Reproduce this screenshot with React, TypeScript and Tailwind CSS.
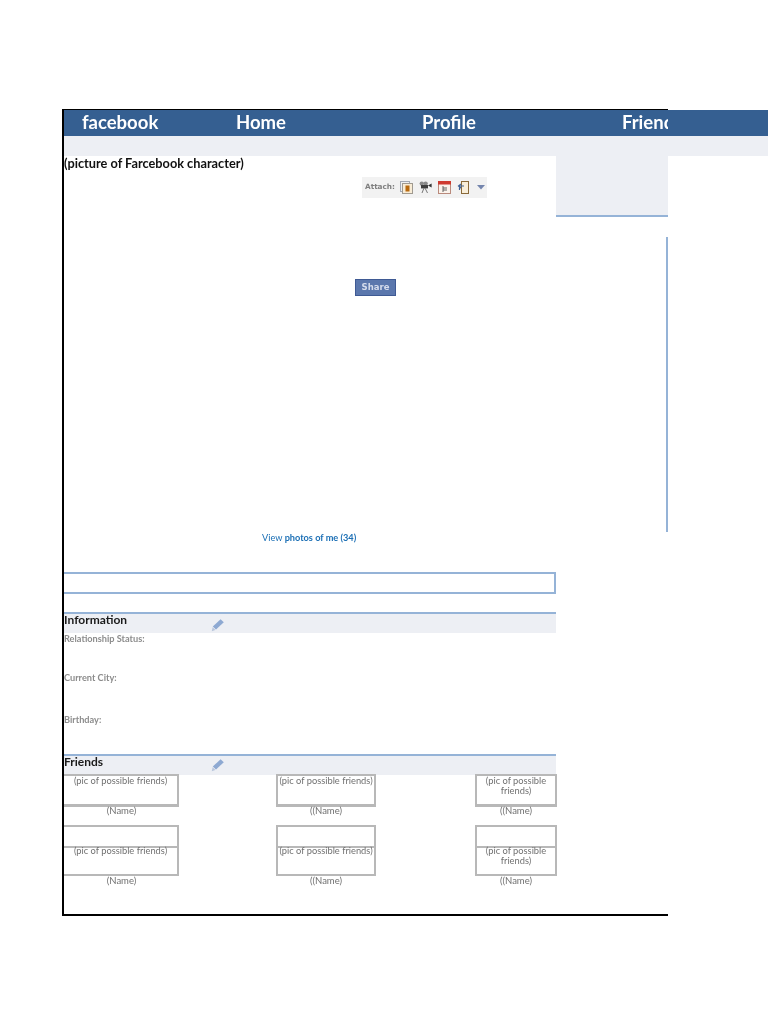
import React from 'react';

const font = { fontFamily: 'Lato, "Open Sans", sans-serif' };

const PenIcon = () => (
  <svg width="14" height="14" viewBox="0 0 14 14">
    <path d="M9.6 1.2 L12.8 4.2 L5 11.6 L1.8 8.6 Z" fill="#8ea9d2" />
    <path d="M1.6 9.2 L4.4 12 L0.8 13.2 Z" fill="#b9c6dc" />
  </svg>
);

const AttachIcons = () => (
  <div className="flex items-center gap-[6px]">
    {/* photo */}
    <svg width="13" height="13" viewBox="0 0 13 13">
      <rect x="0.5" y="0.5" width="9" height="10" fill="#eef0f3" stroke="#a3aab5" />
      <rect x="2.5" y="2.5" width="10" height="10" fill="#f8ecd6" stroke="#a09a90" />
      <rect x="5.5" y="4.5" width="4" height="6" fill="#b8690f" />
    </svg>
    {/* video */}
    <svg width="13" height="13" viewBox="0 0 13 13">
      <circle cx="2.8" cy="2.6" r="2.2" fill="#8a8a8a" />
      <circle cx="6.6" cy="2.6" r="2.2" fill="#8a8a8a" />
      <rect x="2" y="4" width="7" height="3.4" fill="#3f3f3f" />
      <path d="M9 4.4 L12.6 2.6 L12.6 6.6 Z" fill="#333" />
      <path d="M5 7 L3 12 M6 7 L8.5 12" stroke="#777" strokeWidth="1" />
    </svg>
    {/* calendar */}
    <svg width="13" height="13" viewBox="0 0 13 13">
      <rect x="0.5" y="0.5" width="12" height="12" fill="#fbf3ec" stroke="#b98a7c" />
      <rect x="0" y="0" width="13" height="3.5" fill="#cf3a30" />
      <path d="M4 6 H6 V10 H4 M4 8 H6 M8 6 V10" stroke="#555" strokeWidth="0.9" fill="none" />
    </svg>
    {/* link */}
    <svg width="13" height="13" viewBox="0 0 13 13">
      <rect x="4.5" y="0.5" width="7" height="12" fill="#f8eeda" stroke="#8a6a3a" />
      <path d="M7 5 H2 M4 3 L1.5 5 L4 7 M2.5 5 V9" stroke="#3f6296" strokeWidth="1.2" fill="none" />
    </svg>
    <svg width="8" height="5" viewBox="0 0 8 5" className="ml-[1px]">
      <path d="M0 0 H8 L4 4.5 Z" fill="#7485ad" />
    </svg>
  </div>
);

const FriendBox = ({ tall, name, className }: { tall?: boolean; name: string; className: string }) => (
  <div className={`flex shrink-0 flex-col text-center text-[#707070] ${className}`}>
    {tall && <div className="h-[21px] border-2 border-b-0 border-[#b8b8b8]" />}
    <div className={`border-2 border-[#b8b8b8] text-[9.3px] leading-[10px] ${tall ? 'h-[30px]' : 'h-[33px] border-b-[3px]'}`}>
      <span className={`block ${tall ? '-mt-[2px]' : ''}`}>(pic of possible friends)</span>
    </div>
    <div className={`text-[9.5px] leading-[12px] ${tall ? '-mt-[1px]' : '-mt-[2px]'}`}>{name}</div>
  </div>
);

const FriendRow = ({ tall }: { tall?: boolean }) => (
  <div className="flex">
    <FriendBox tall={tall} name="(Name)" className="w-[115px] [&>div]:border-l-0" />
    <FriendBox tall={tall} name="((Name)" className="ml-[97px] w-[100px]" />
    <FriendBox tall={tall} name="((Name)" className="ml-[99px] w-[82px]" />
  </div>
);

const SectionHead = ({ title, penOffset }: { title: string; penOffset: string }) => (
  <div className="flex h-[21px] items-start border-t-2 border-[#95b3d7] bg-[#edeff4]">
    <span className="w-[147px] text-[12px] font-bold leading-[11px] text-[#1a1a1a]">{title}</span>
    <span className={penOffset}><PenIcon /></span>
  </div>
);

export default function App() {
  return (
    <div className="h-[1024px] w-[768px] overflow-hidden bg-white pl-[62px] pt-[109px] blur-[0.35px]" style={font}>
      <div className="h-[807px] w-[606px] border-b-2 border-l-2 border-t border-black">
        {/* top nav */}
        <div className="h-[26px] w-[704px] bg-[#355f91]">
          <div className="flex h-full w-[604px] items-center overflow-hidden whitespace-nowrap text-[18.5px] font-bold text-white">
            <span className="ml-[18px] w-[154px] shrink-0">facebook</span>
            <span className="w-[186px] shrink-0">Home</span>
            <span className="w-[200px] shrink-0">Profile</span>
            <span className="shrink-0">Friends</span>
          </div>
        </div>
        <div className="h-[20px] w-[704px] bg-[#edeff4]" />

        <div className="flex">
          <div className="w-[492px] shrink-0">
            <div className="flex h-[416px] flex-col items-start">
              <div className="text-[12.75px] font-bold leading-[15px] text-[#111]">(picture of Farcebook character)</div>
              <div className="ml-[298px] mt-[6px] flex h-[21px] w-[125px] items-center bg-[#f2f2f2] pl-[3px]">
                <span className="mr-[5px] font-['DejaVu_Sans'] text-[7.3px] font-bold text-[#7f7f7f]">Attach:</span>
                <AttachIcons />
              </div>
              <div className="ml-[291px] mt-[81px] flex h-[17px] w-[41px] items-center justify-center border border-[#3f5a94] bg-[#5b77ad] font-['DejaVu_Sans'] text-[8.5px] font-bold text-[#d5dcec]">
                Share
              </div>
              <div className="ml-[198px] mt-[236px] text-[9.2px] leading-[12px] text-[#1b6fb5]">
                View <span className="font-bold">photos of me (34)</span>
              </div>
            </div>

            <div className="h-[22px] border-2 border-l-0 border-[#95b3d7]" />

            <div className="mt-[18px]">
              <SectionHead title="Information" penOffset="mt-[4px]" />
              <div className="h-[121px] pt-[1px] text-[9.2px] font-bold text-[#8c8c8c]">
                <div className="h-[39px] leading-[10px]">Relationship Status:</div>
                <div className="h-[42px] leading-[10px]">Current City:</div>
                <div className="leading-[10px]">Birthday:</div>
              </div>
            </div>

            <SectionHead title="Friends" penOffset="mt-[2px]" />
            <div className="-mt-[1px] flex flex-col gap-[8px]">
              <FriendRow />
              <FriendRow tall />
            </div>
          </div>

          {/* right rail */}
          <div className="w-[112px]">
            <div className="h-[61px] border-b-2 border-[#95b3d7] bg-[#edeff4]" />
            <div className="mt-[20px] h-[295px] border-r-2 border-[#95b3d7]" />
          </div>
        </div>
      </div>
    </div>
  );
}
